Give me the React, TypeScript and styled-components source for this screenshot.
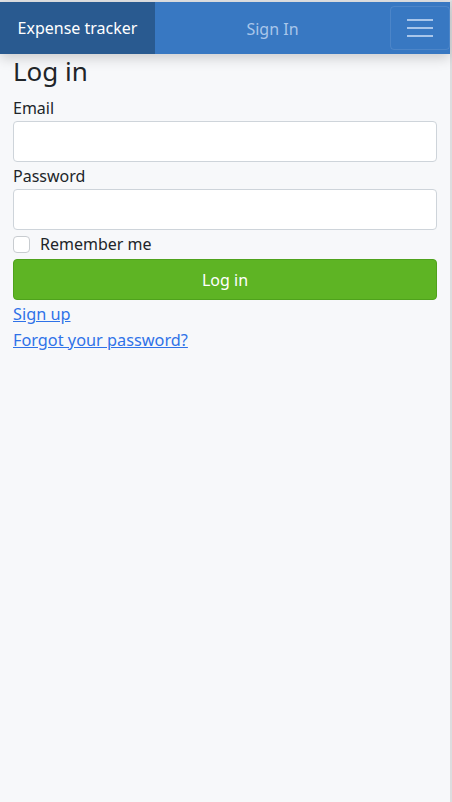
import React from "react";
import styled, { createGlobalStyle } from "styled-components";

const GlobalStyle = createGlobalStyle`
  html, body {
    margin: 0;
    padding: 0;
    height: 100%;
  }
  body {
    background: #f7f8fa;
    font-family: "Noto Sans", "Open Sans", sans-serif;
    color: #212529;
  }
  #root {
    min-height: 100%;
  }
`;

const Frame = styled.div`
  box-sizing: border-box;
  min-height: 802px;
  border-top: 2px solid #e3e4e6;
  border-right: 2px solid #dcdddf;
  background: #f7f8fa;
`;

const NavBar = styled.nav`
  display: flex;
  align-items: center;
  height: 52px;
  background: #3878c2;
  box-shadow: 0 4px 12px rgba(0, 0, 0, 0.18);
  position: relative;
  z-index: 1;
`;

const Brand = styled.a`
  display: flex;
  align-items: center;
  justify-content: center;
  width: 155px;
  height: 100%;
  background: #295a90;
  color: #fff;
  font-size: 16px;
  text-decoration: none;
`;

const NavLink = styled.a`
  flex: 1;
  text-align: center;
  color: #a9c6ea;
  font-size: 16px;
  line-height: 20px;
  padding-top: 2px;
  text-decoration: none;
`;

const Toggler = styled.button`
  display: flex;
  align-items: center;
  justify-content: center;
  width: 60px;
  height: 44px;
  padding: 0;
  background: transparent;
  border: 1px solid rgba(255, 255, 255, 0.1);
  border-radius: 4px;
`;

const Main = styled.main`
  padding: 2px 13px 0 13px;
`;

const Title = styled.h2`
  margin: 0 0 12px;
  font-size: 26px;
  font-weight: 400;
  line-height: 30px;
`;

const Field = styled.div`
  display: flex;
  flex-direction: column;
  margin-bottom: 4px;
`;

const Label = styled.label`
  font-size: 16px;
  line-height: 20px;
  margin-bottom: 3px;
`;

const Input = styled.input`
  box-sizing: border-box;
  height: 41px;
  width: 100%;
  border: 1px solid #ced4da;
  border-radius: 4px;
  background: #fff;
`;

const CheckRow = styled.div`
  display: flex;
  align-items: center;
  gap: 10px;
  margin: 0 0 5px;
  font-size: 16px;
  line-height: 20px;
`;

const Box = styled.span`
  box-sizing: border-box;
  width: 17px;
  height: 17px;
  border: 1px solid #c8ccd0;
  border-radius: 4px;
  background: #fff;
`;

const SubmitButton = styled.button`
  box-sizing: border-box;
  width: 100%;
  height: 41px;
  border: 1px solid #4fa21c;
  border-radius: 4px;
  background: #5eb424;
  color: #fff;
  font-family: inherit;
  font-size: 16px;
`;

const Links = styled.div`
  display: flex;
  flex-direction: column;
  align-items: flex-start;
  margin-top: 1px;
`;

const TextLink = styled.a`
  color: #2f72e8;
  font-size: 16.3px;
  line-height: 26px;
  text-decoration: underline;
`;

function MenuIcon() {
  return (
    <svg width="28" height="22" viewBox="0 0 28 22">
      <g stroke="#a9c6ea" strokeWidth="2">
        <line x1="1" y1="3" x2="27" y2="3" />
        <line x1="1" y1="11" x2="27" y2="11" />
        <line x1="1" y1="19" x2="27" y2="19" />
      </g>
    </svg>
  );
}

export default function App() {
  return (
    <>
      <GlobalStyle />
      <Frame>
        <NavBar>
          <Brand href="#">Expense tracker</Brand>
          <NavLink href="#">Sign In</NavLink>
          <Toggler aria-label="Toggle navigation">
            <MenuIcon />
          </Toggler>
        </NavBar>
        <Main>
          <Title>Log in</Title>
          <Field>
            <Label>Email</Label>
            <Input type="email" />
          </Field>
          <Field>
            <Label>Password</Label>
            <Input type="password" />
          </Field>
          <CheckRow>
            <Box />
            <span>Remember me</span>
          </CheckRow>
          <SubmitButton>Log in</SubmitButton>
          <Links>
            <TextLink href="#">Sign up</TextLink>
            <TextLink href="#">Forgot your password?</TextLink>
          </Links>
        </Main>
      </Frame>
    </>
  );
}
